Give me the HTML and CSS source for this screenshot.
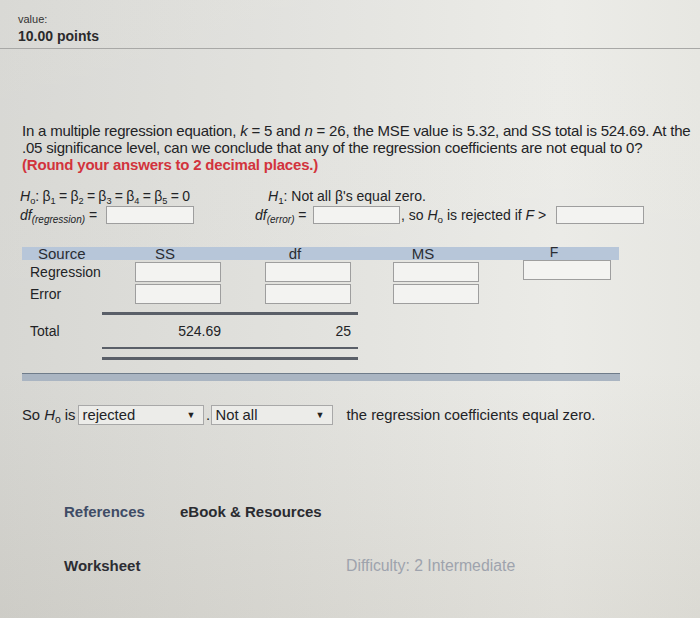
FILE: index.html
```html
<!DOCTYPE html>
<html>
<head>
<meta charset="utf-8">
<link rel="stylesheet" href="styles.css">
</head>
<body>
<div class="page">
  <div class="head">
    <div class="value-label">value:</div>
    <div class="points">10.00 points</div>
  </div>
  <div class="rule"></div>

  <p class="question">In a multiple regression equation, <i>k</i> = 5 and <i>n</i> = 26, the MSE value is 5.32, and SS total is 524.69. At the<br>.05 significance level, can we conclude that any of the regression coefficients are not equal to 0?<br><b class="red">(Round your answers to 2 decimal places.)</b></p>

  <div class="hyp-row">
    <div class="h0"><i>H</i><sub>o</sub>: β<sub>1</sub> = β<sub>2</sub> = β<sub>3</sub> = β<sub>4</sub> = β<sub>5</sub> = 0</div>
    <div class="h1"><i>H</i><sub>1</sub>: Not all β's equal zero.</div>
  </div>
  <div class="df-row">
    <span class="df-label"><i>df</i><sub><i>(regression)</i></sub> =</span><span class="box box-dfreg"></span>
    <span class="df-label df-err"><i>df</i><sub><i>(error)</i></sub> =</span><span class="box box-dferr"></span><span class="so">, so <i>H</i><sub>o</sub> is rejected if <i>F</i> &gt;</span><span class="box box-f"></span>
  </div>

  <div class="anova">
    <div class="hdr hdr-source">Source</div>
    <div class="hdr hdr-ss">SS</div>
    <div class="hdr"></div>
    <div class="hdr hdr-df">df</div>
    <div class="hdr"></div>
    <div class="hdr hdr-ms">MS</div>
    <div class="hdr"></div>
    <div class="hdr hdr-f">F</div>
    <div class="hdr"></div>

    <div class="lbl">Regression</div>
    <div class="cell"><span class="box tbox"></span></div>
    <div></div>
    <div class="cell"><span class="box tbox"></span></div>
    <div></div>
    <div class="cell"><span class="box tbox"></span></div>
    <div></div>
    <div class="cell cell-f"><span class="box tbox fbox"></span></div>
    <div></div>

    <div class="lbl">Error</div>
    <div class="cell"><span class="box tbox"></span></div>
    <div></div>
    <div class="cell"><span class="box tbox"></span></div>
    <div></div>
    <div class="cell"><span class="box tbox"></span></div>
    <div></div>
    <div></div>
    <div></div>
  </div>

  <div class="line thick"></div>
  <div class="total-row">
    <span class="total-lbl">Total</span>
    <span class="total-ss">524.69</span>
    <span class="total-df">25</span>
  </div>
  <div class="line dbl1"></div>
  <div class="line dbl2"></div>

  <div class="bar"></div>

  <div class="concl">
    <span>So <i>H</i><sub>o</sub> is</span>
    <span class="select sel1"><span>rejected</span><span class="arrow">▼</span></span>
    <span class="dot">.</span>
    <span class="select sel2"><span>Not all</span><span class="arrow">▼</span></span>
    <span class="tail">the regression coefficients equal zero.</span>
  </div>

  <div class="links">
    <span class="ref">References</span>
    <span class="ebook">eBook &amp; Resources</span>
  </div>
  <div class="foot">
    <span class="ws">Worksheet</span>
    <span class="diff">Difficulty: 2 Intermediate</span>
  </div>
</div>
</body>
</html>
```

FILE: styles.css
```css
html, body {
  margin: 0;
  padding: 0;
}
body {
  width: 700px;
  height: 618px;
  overflow: hidden;
  font-family: "Liberation Sans", Arial, sans-serif;
  color: #222326;
  background: linear-gradient(90deg, #d7d7d3 0%, #e2e2de 45%, #ebebe7 80%, #e6e6e1 100%);
}
.page {
  width: 700px;
  height: 618px;
  background: linear-gradient(180deg, rgba(255,255,255,0.05) 0%, rgba(255,255,255,0) 60%, rgba(120,110,90,0.1) 100%);
}
.head {
  padding: 13px 0 0 18px;
}
.value-label {
  font-size: 11px;
  line-height: 12px;
  color: #333;
}
.points {
  font-size: 14px;
  line-height: 17px;
  font-weight: bold;
  color: #2a2a2c;
  margin-top: 3px;
}
.rule {
  height: 1px;
  background: #a8a8a6;
  margin-top: 3px;
}
.question {
  margin: 73px 0 0 22px;
  width: 678px;
  font-size: 15px;
  line-height: 17px;
  letter-spacing: -0.2px;
  white-space: nowrap;
}
.red {
  color: #d2333c;
}
sub {
  font-size: 70%;
  line-height: 0;
  vertical-align: -0.3em;
}
.hyp-row {
  display: flex;
  margin: 15px 0 0 20px;
  font-size: 14px;
  line-height: 17px;
}
.h0 {
  width: 248px;
  word-spacing: -0.6px;
}
.h0 sub {
  font-size: 66%;
}
.df-row {
  display: flex;
  align-items: center;
  margin: 0 0 0 20px;
  font-size: 14px;
  height: 19px;
}
.df-label {
  width: 86px;
}
.df-label sub {
  font-size: 10px;
}
.df-err {
  margin-left: 61px;
  width: 58px;
}
.box {
  display: inline-block;
  height: 17px;
  border: 1px solid #9e9e9e;
  background: #f3f3f1;
  box-sizing: border-box;
}
.box-dfreg { width: 88px; height: 18px; }
.box-dferr { width: 87px; height: 18px; }
.so { margin-left: 1px; width: 155px; }
.box-f { width: 88px; height: 18px; }

.anova {
  display: grid;
  grid-template-columns: 113px 86px 44px 86px 42px 86px 44px 88px 8px;
  grid-template-rows: 13px 22px 22px;
  margin: 23px 0 0 22px;
  width: 597px;
}
.hdr {
  background: #b7c6d9;
  font-size: 15px;
  line-height: 13px;
  height: 13px;
  color: #2a2d33;
  white-space: nowrap;
}
.hdr-source { padding-left: 16px; }
.hdr-ss, .hdr-df, .hdr-ms, .hdr-f {
  text-align: center;
  text-indent: -26px;
}
.hdr-f {
  font-size: 14px;
  line-height: 11px;
}
.lbl {
  font-size: 14px;
  line-height: 20px;
  padding-left: 8px;
  margin-top: 2px;
}
.cell {
  padding-top: 2px;
}
.cell-f {
  padding-top: 0;
}
.tbox {
  display: block;
  width: 86px;
  height: 20px;
}
.fbox {
  width: 88px;
}
.line {
  height: 3px;
  background: #5a5f68;
  margin-left: 102px;
  width: 256px;
}
.thick {
  margin-top: 8px;
}
.total-row {
  display: flex;
  height: 32px;
  align-items: center;
  font-size: 14px;
  padding-left: 30px;
}
.total-lbl { width: 105px; }
.total-ss { width: 86px; text-align: right; }
.total-df { width: 130px; text-align: right; }
.dbl1 { height: 2px; }
.dbl2 { margin-top: 8px; height: 3px; }
.bar {
  margin: 13px 0 0 22px;
  width: 598px;
  height: 8px;
  background: #aab5c2;
  border-top: 1px solid #6f7c8a;
  box-sizing: border-box;
}
.concl {
  display: flex;
  align-items: center;
  margin: 24px 0 0 22px;
  font-size: 14.8px;
  height: 20px;
}
.select {
  display: flex;
  align-items: center;
  justify-content: space-between;
  height: 20px;
  box-sizing: border-box;
  border: 1px solid #a8a8a8;
  background: #ecece9;
  padding: 0 8px 0 3px;
}
.sel1 { width: 126px; margin-left: 3px; }
.sel2 { width: 122px; }
.dot { width: 7px; text-align: center; }
.arrow {
  font-size: 9px;
  color: #222;
}
.tail { margin-left: 13px; }
.links {
  display: flex;
  margin: 78px 0 0 64px;
  font-size: 15px;
  font-weight: bold;
  line-height: 18px;
}
.ref { color: #3f4c66; width: 116px; }
.ebook { color: #2a2b30; }
.foot {
  display: flex;
  margin: 36px 0 0 64px;
  font-size: 15.8px;
  line-height: 18px;
}
.ws { font-weight: bold; color: #2c2d33; width: 282px; font-size: 15px; }
.diff { color: #9ea3ad; }
```
